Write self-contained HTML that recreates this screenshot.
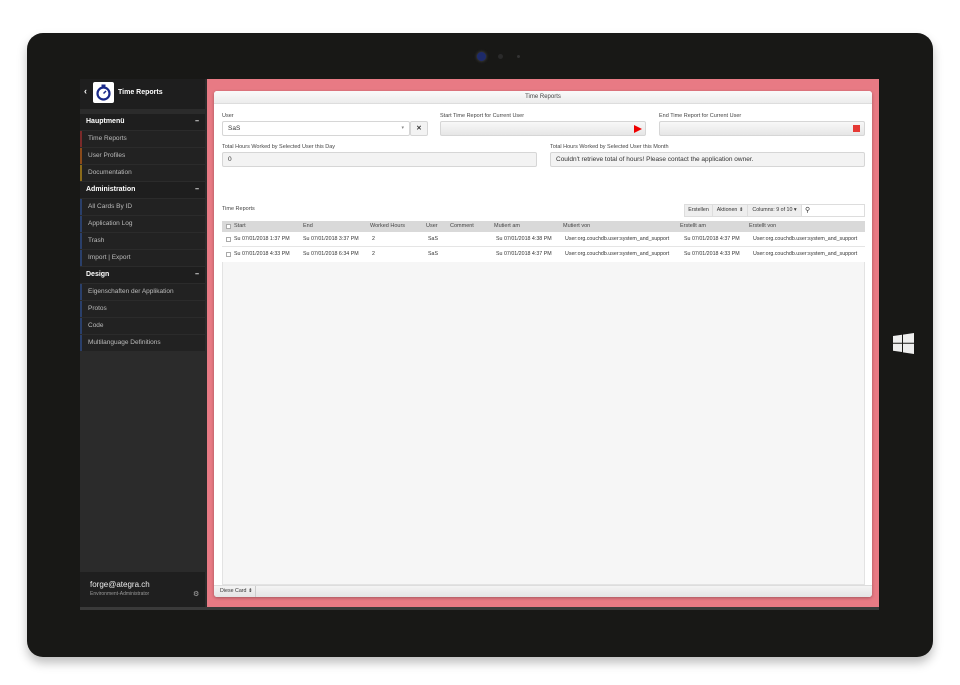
<!DOCTYPE html>
<html><head><meta charset="utf-8"><style>
*{margin:0;padding:0;box-sizing:border-box}
body{width:960px;height:685px;background:#fff;position:relative;overflow:hidden;font-family:"Liberation Sans",sans-serif}
.a{position:absolute}
.tab{left:27px;top:33px;width:906px;height:624px;background:#181816;border-radius:16px;box-shadow:0 6px 10px rgba(0,0,0,.25)}
.sb{left:80px;top:79px;width:127px;height:528px;background:#2b2b2b}
.row{position:absolute;left:0;width:125px;height:16px;background:#222;color:#bbb;font-size:6.5px;line-height:16px;padding-left:6px;border-left:2px solid #2a3f6a}
.hd{background:#1e1e1e;color:#fff;font-weight:bold;font-size:7px;border-left:none;padding-left:6px}
.hd span{position:absolute;right:6px;top:0}
.lbl{font-size:5.5px;color:#444}
.inp{background:#f3f3f3;border:1px solid #d6d6d6;border-radius:2px;font-size:6.5px;color:#333;line-height:13px;padding-left:5px}
.th{font-size:5.5px;color:#444;position:absolute;top:0;line-height:11px}
.td{font-size:5.3px;color:#333;position:absolute;line-height:15px}
</style></head><body>
<div class="a tab"></div>
<div class="a" style="left:477px;top:52px;width:9px;height:9px;border-radius:50%;background:#1d2a6a;box-shadow:0 0 3px #555"></div>
<div class="a" style="left:498px;top:54px;width:5px;height:5px;border-radius:50%;background:#2a2a2a"></div>
<div class="a" style="left:517px;top:55px;width:3px;height:3px;border-radius:50%;background:#333"></div>
<svg class="a" style="left:893px;top:333px" width="21" height="21"><g fill="#eee"><polygon points="0,3 9,1.8 9,9.8 0,9.8"/><polygon points="10,1.6 21,0 21,9.8 10,9.8"/><polygon points="0,10.8 9,10.8 9,19 0,17.8"/><polygon points="10,10.8 21,10.8 21,21 10,19.4"/></g></svg>
<div class="a" style="left:80px;top:607px;width:799px;height:3px;background:#3a3a3a"></div>
<div class="a sb">
 <div class="a" style="left:0;top:0;width:125px;height:30px;background:#1e1e1e"></div>
 <div class="a" style="left:4px;top:7px;color:#fff;font-size:9px;font-weight:bold">‹</div>
 <div class="a" style="left:13px;top:3px;width:21px;height:21px;background:#fff;border-radius:2px"></div>
 <svg class="a" style="left:15px;top:5px" width="17" height="17"><circle cx="8.5" cy="9.5" r="6" fill="none" stroke="#1a2a8a" stroke-width="2.2"/><rect x="6.5" y="0.5" width="4" height="2" fill="#1a2a8a"/><line x1="8.5" y1="9.5" x2="11" y2="7" stroke="#1a2a8a" stroke-width="1.5"/></svg>
 <div class="a" style="left:38px;top:10px;color:#fff;font-size:7px;font-weight:bold">Time Reports</div>
 <div class="row hd" style="top:35px">Hauptmenü<span>–</span></div>
 <div class="row" style="top:52px;border-left-color:#7a2a2a">Time Reports</div>
 <div class="row" style="top:69px;border-left-color:#8a4a1a">User Profiles</div>
 <div class="row" style="top:86px;border-left-color:#8a6a1a">Documentation</div>
 <div class="row hd" style="top:103px">Administration<span>–</span></div>
 <div class="row" style="top:120px">All Cards By ID</div>
 <div class="row" style="top:137px">Application Log</div>
 <div class="row" style="top:154px">Trash</div>
 <div class="row" style="top:171px">Import | Export</div>
 <div class="row hd" style="top:188px">Design<span>–</span></div>
 <div class="row" style="top:205px">Eigenschaften der Applikation</div>
 <div class="row" style="top:222px">Protos</div>
 <div class="row" style="top:239px">Code</div>
 <div class="row" style="top:256px">Multilanguage Definitions</div>
 <div class="a" style="left:0;top:493px;width:125px;height:35px;background:#1f1f1f"></div>
 <div class="a" style="left:10px;top:501px;color:#eee;font-size:8px">forge@ategra.ch</div>
 <div class="a" style="left:10px;top:512px;color:#999;font-size:5px">Environment-Administrator</div>
 <div class="a" style="left:113px;top:511px;color:#aaa;font-size:7px">⚙</div>
</div>
<div class="a" style="left:207px;top:79px;width:672px;height:528px;background:#e87a84"></div>
<div class="a" style="left:214px;top:91px;width:658px;height:506px;background:#fff;border-radius:3px;box-shadow:0 1px 3px rgba(0,0,0,.3)">
 <div class="a" style="left:0;top:0;width:658px;height:13px;background:linear-gradient(#fafafa,#ececec);border-bottom:1px solid #ddd;text-align:center;font-size:6px;color:#444;line-height:13px;border-radius:3px 3px 0 0">Time Reports</div>
 <div class="a lbl" style="left:8px;top:22px">User</div>
 <div class="a inp" style="left:8px;top:30px;width:188px;height:15px;background:#fff;line-height:13px">SaS<span style="position:absolute;right:5px;font-size:5px;color:#888">▾</span></div>
 <div class="a inp" style="left:196px;top:30px;width:18px;height:15px;text-align:center;padding:0;font-weight:bold">✕</div>
 <div class="a lbl" style="left:226px;top:22px">Start Time Report for Current User</div>
 <div class="a inp" style="left:226px;top:30px;width:206px;height:15px;background:linear-gradient(#f8f8f8,#e6e6e6)"><svg class="a" style="right:3px;top:3px" width="8" height="8"><polygon points="0,0 8,4 0,8" fill="#e00"/></svg></div>
 <div class="a lbl" style="left:445px;top:22px">End Time Report for Current User</div>
 <div class="a inp" style="left:445px;top:30px;width:206px;height:15px;background:linear-gradient(#f8f8f8,#e6e6e6)"><div class="a" style="right:4px;top:3px;width:7px;height:7px;background:#e53935"></div></div>
 <div class="a lbl" style="left:8px;top:53px">Total Hours Worked by Selected User this Day</div>
 <div class="a inp" style="left:8px;top:61px;width:315px;height:15px">0</div>
 <div class="a lbl" style="left:336px;top:53px">Total Hours Worked by Selected User this Month</div>
 <div class="a inp" style="left:336px;top:61px;width:315px;height:15px">Couldn't retrieve total of hours! Please contact the application owner.</div>
 <div class="a lbl" style="left:8px;top:115px">Time Reports</div>
 <div class="a" style="left:470px;top:113px;width:181px;height:13px;border:1px solid #ddd;background:#fff;font-size:5.3px;color:#333;line-height:11px">
  <span class="a" style="left:0;width:28px;height:11px;background:#eee;border-right:1px solid #ddd;text-align:center">Erstellen</span>
  <span class="a" style="left:28px;width:35px;height:11px;background:#eee;border-right:1px solid #ddd;text-align:center">Aktionen ⇟</span>
  <span class="a" style="left:63px;width:54px;height:11px;background:#eee;border-right:1px solid #ddd;text-align:center">Columns: 9 of 10 ▾</span>
  <span class="a" style="left:120px;font-size:7px">⚲</span>
 </div>
 <div class="a" style="left:8px;top:130px;width:643px;height:364px;background:#f6f6f6;border:1px solid #e3e3e3"></div>
 <div class="a" style="left:8px;top:130px;width:643px;height:11px;background:#d9d9d9">
  <span class="a" style="left:4px;top:3px;width:5px;height:5px;background:#fff;border:1px solid #aaa"></span>
  <span class="th" style="left:12px">Start</span><span class="th" style="left:81px">End</span><span class="th" style="left:148px">Worked Hours</span><span class="th" style="left:204px">User</span><span class="th" style="left:228px">Comment</span><span class="th" style="left:272px">Mutiert am</span><span class="th" style="left:341px">Mutiert von</span><span class="th" style="left:458px">Erstellt am</span><span class="th" style="left:527px">Erstellt von</span>
 </div>
 <div class="a" style="left:8px;top:141px;width:643px;height:15px;background:#fff;border-bottom:1px solid #e5e5e5">
  <span class="a" style="left:4px;top:5px;width:5px;height:5px;border:1px solid #aaa"></span>
  <span class="td" style="left:12px">Su 07/01/2018 1:37 PM</span><span class="td" style="left:81px">Su 07/01/2018 3:37 PM</span><span class="td" style="left:150px">2</span><span class="td" style="left:206px">SaS</span><span class="td" style="left:274px">Su 07/01/2018 4:38 PM</span><span class="td" style="left:343px">User:org.couchdb.user:system_and_support</span><span class="td" style="left:462px">Su 07/01/2018 4:37 PM</span><span class="td" style="left:531px">User:org.couchdb.user:system_and_support</span>
 </div>
 <div class="a" style="left:8px;top:156px;width:643px;height:15px;background:#fff">
  <span class="a" style="left:4px;top:5px;width:5px;height:5px;border:1px solid #aaa"></span>
  <span class="td" style="left:12px">Su 07/01/2018 4:33 PM</span><span class="td" style="left:81px">Su 07/01/2018 6:34 PM</span><span class="td" style="left:150px">2</span><span class="td" style="left:206px">SaS</span><span class="td" style="left:274px">Su 07/01/2018 4:37 PM</span><span class="td" style="left:343px">User:org.couchdb.user:system_and_support</span><span class="td" style="left:462px">Su 07/01/2018 4:33 PM</span><span class="td" style="left:531px">User:org.couchdb.user:system_and_support</span>
 </div>
 <div class="a" style="left:0;top:494px;width:658px;height:12px;background:linear-gradient(#f4f4f4,#e4e4e4);border-top:1px solid #ddd;border-radius:0 0 3px 3px">
  <span class="a" style="left:0;top:0;width:42px;height:11px;border-right:1px solid #ccc;font-size:5.3px;line-height:11px;padding-left:6px;color:#333">Diese Card ⇟</span>
 </div>
</div>
</body></html>
